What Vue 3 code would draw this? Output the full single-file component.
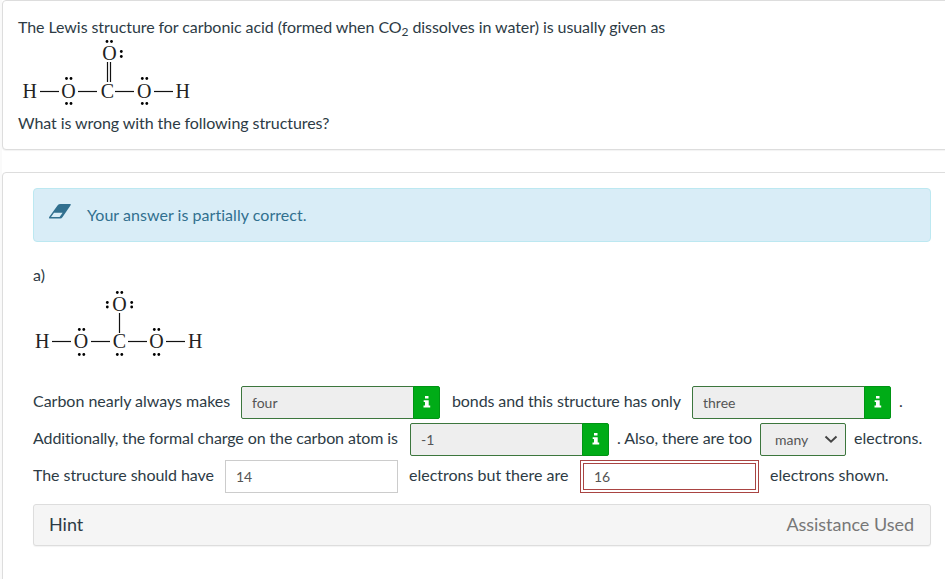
<script setup>
import { ref } from 'vue'

const bonds = ref('four')
const drawn = ref('three')
const charge = ref('-1')
const amount = ref('many')
const expected = ref('14')
const shown = ref('16')

// Atoms, bonds and lone pairs, in each drawing's own coordinates
const carbonic = {
  atoms: [
    ['H', 11.8, 58], ['O', 50.5, 58], ['C', 89.3, 58], ['O', 126.2, 58], ['H', 164.7, 58], ['O', 91.5, 20]
  ],
  lines: [
    [22, 51.5, 41, 51.5], [60, 51.5, 79, 51.5], [97, 51.5, 116, 51.5], [136, 51.5, 155, 51.5],
    [89.5, 22, 89.5, 42], [92.5, 22, 92.5, 42]
  ],
  dots: [
    [89, 1.5], [93.5, 1.5], [103.3, 11.5], [103.3, 16.5],
    [48.5, 38.5], [53, 38.5], [48.5, 63.5], [53, 63.5],
    [124.3, 38.5], [128.8, 38.5], [124.3, 63.5], [128.8, 63.5]
  ]
}
const variant = {
  atoms: [
    ['H', 9.3, 58], ['O', 48, 58], ['C', 86.3, 58], ['O', 123.5, 58], ['H', 162.3, 58], ['O', 86.5, 21]
  ],
  lines: [
    [19, 51.5, 38, 51.5], [58, 51.5, 77, 51.5], [95, 51.5, 114, 51.5], [133, 51.5, 152, 51.5],
    [86.5, 23, 86.5, 43]
  ],
  dots: [
    [84.3, 2.5], [88.8, 2.5], [74.3, 12.5], [74.3, 17], [98.7, 12.5], [98.7, 17],
    [46.3, 39.5], [50.8, 39.5], [46.3, 64.5], [50.8, 64.5],
    [84.3, 64.5], [88.8, 64.5],
    [121.3, 39.5], [125.8, 39.5], [121.3, 64.5], [125.8, 64.5]
  ]
}
</script>

<template>
  <main class="page">
    <section class="panel question">
      <p class="line">The Lewis structure for carbonic acid (formed when CO<sub>2</sub> dissolves in water) is usually given as</p>
      <svg class="molecule" width="180" height="70" viewBox="0 0 180 70">
        <line v-for="(l, i) in carbonic.lines" :key="'l' + i" :x1="l[0]" :y1="l[1]" :x2="l[2]" :y2="l[3]" />
        <text v-for="(a, i) in carbonic.atoms" :key="'a' + i" :x="a[1]" :y="a[2]">{{ a[0] }}</text>
        <circle v-for="(d, i) in carbonic.dots" :key="'d' + i" :cx="d[0]" :cy="d[1]" r="1.4" />
      </svg>
      <p class="line second">What is wrong with the following structures?</p>
    </section>

    <section class="panel answer">
      <div class="alert">
        <svg class="eraser" width="24" height="18" viewBox="0 0 24 18">
          <path d="M12.6 1H22Q23.4 1 22.6 2.3L14.6 13.9Q13.6 15.4 12.2 15.4H2Q.2 15.4 1.2 13.9L9.5 2.4Q10.6 1 12.6 1ZM6 9.8L3 14H11.6L14.6 9.8Z" fill-rule="evenodd" />
        </svg>
        <span>Your answer is partially correct.</span>
      </div>
      <p class="part">a)</p>
      <svg class="molecule" width="180" height="70" viewBox="0 0 180 70">
        <line v-for="(l, i) in variant.lines" :key="'l' + i" :x1="l[0]" :y1="l[1]" :x2="l[2]" :y2="l[3]" />
        <text v-for="(a, i) in variant.atoms" :key="'a' + i" :x="a[1]" :y="a[2]">{{ a[0] }}</text>
        <circle v-for="(d, i) in variant.dots" :key="'d' + i" :cx="d[0]" :cy="d[1]" r="1.4" />
      </svg>

      <div class="rows">
        <div class="row">
          <span class="w1">Carbon nearly always makes</span>
          <div class="group">
            <input v-model="bonds" class="field" readonly />
            <button class="info"><svg width="8" height="12" viewBox="0 0 8 12"><path d="M2 0H5.5V2.6H2ZM.7 4.2H5.7V9.5H7.2V11.4H.5V9.5H2V6.1H.7Z" /></svg></button>
          </div>
          <span class="w2">bonds and this structure has only</span>
          <div class="group">
            <input v-model="drawn" class="field" readonly />
            <button class="info"><svg width="8" height="12" viewBox="0 0 8 12"><path d="M2 0H5.5V2.6H2ZM.7 4.2H5.7V9.5H7.2V11.4H.5V9.5H2V6.1H.7Z" /></svg></button>
          </div>
          <span class="near">.</span>
        </div>
        <div class="row">
          <span class="w3">Additionally, the formal charge on the carbon atom is</span>
          <div class="group">
            <input v-model="charge" class="field" readonly />
            <button class="info"><svg width="8" height="12" viewBox="0 0 8 12"><path d="M2 0H5.5V2.6H2ZM.7 4.2H5.7V9.5H7.2V11.4H.5V9.5H2V6.1H.7Z" /></svg></button>
          </div>
          <span class="w4">. Also, there are too</span>
          <div class="choice">
            <span>{{ amount }}</span>
            <svg width="14" height="9" viewBox="0 0 14 9"><path d="M1.5 1.5L7 6.7L12.5 1.5" /></svg>
          </div>
          <span class="near">electrons.</span>
        </div>
        <div class="row">
          <span class="w5">The structure should have</span>
          <input v-model="expected" class="field plain" />
          <span class="w6">electrons but there are</span>
          <div class="wrong"><input v-model="shown" class="field" /></div>
          <span class="after">electrons shown.</span>
        </div>
      </div>

      <div class="hint">
        <span>Hint</span>
        <span class="used">Assistance Used</span>
      </div>
    </section>
  </main>
</template>

<style>
body {
  margin: 0;
  background: #fff;
  overflow: hidden;
}
</style>

<style scoped>
.page {
  box-sizing: border-box;
  width: 945px;
  height: 579px;
  padding-left: 2px;
  overflow: hidden;
  background: linear-gradient(to right, #fafafa 2px, #fff 2px);
  color: #2d3b45;
  font: 16px/24px Lato, "Liberation Sans", sans-serif;
}
.panel {
  box-sizing: border-box;
  width: 960px;
  border: 1px solid #ddd;
  border-radius: 4px;
  background: #fff;
  box-shadow: 0 1px 1px rgba(0, 0, 0, 0.05);
}
.question {
  height: 150px;
  padding: 14px 15px 0;
}
.line {
  height: 25px;
  margin: 0;
  white-space: nowrap;
  letter-spacing: -0.07px;
}
.line sub {
  font-size: 12px;
  line-height: 0;
  position: relative;
  vertical-align: baseline;
  bottom: -3px;
}
.second {
  margin-top: 1px;
}
.molecule {
  display: block;
  overflow: visible;
}
.molecule text {
  font: 20px "Liberation Serif", serif;
  text-anchor: middle;
  fill: #222;
}
.molecule line {
  stroke: #111;
  stroke-width: 1.2;
}
.molecule circle {
  fill: #000;
}
.answer {
  height: 430px;
  margin-top: 22px;
  padding: 15px 30px 0;
}
.alert {
  box-sizing: border-box;
  display: flex;
  width: 898px;
  height: 54px;
  padding: 14px;
  border: 1px solid #bce8f1;
  border-radius: 4px;
  background: #d9edf7;
  color: #31708f;
  letter-spacing: 0.04px;
}
.eraser {
  width: 24px;
  margin-right: 15px;
  fill: #31708f;
}
.part {
  margin: 21px 0 3px;
}
.rows {
  display: grid;
  gap: 4px;
  margin-top: 26px;
}
.row {
  display: flex;
  height: 33px;
  white-space: nowrap;
}
.row > span {
  box-sizing: border-box;
  line-height: 29px;
  flex: none;
}
.w1 { width: 208px; letter-spacing: -0.02px; }
.w2 { width: 252px; padding-left: 12px; letter-spacing: -0.1px; }
.w3 { width: 377px; letter-spacing: -0.11px; }
.w4 { width: 151px; padding-left: 8px; letter-spacing: -0.08px; }
.w5 { width: 192px; letter-spacing: -0.06px; }
.w6 { width: 182px; padding-left: 11px; }
.near { padding-left: 8px; }
.after { padding-left: 11px; }
.group {
  display: flex;
  flex: none;
  width: 199px;
}
.field {
  box-sizing: border-box;
  width: 173px;
  height: 33px;
  margin: 0;
  padding: 0 10px;
  border: 1px solid #3c763d;
  border-radius: 2px 0 0 2px;
  outline: none;
  background: #eee;
  color: #555;
  font: 14px Lato, sans-serif;
}
.info {
  box-sizing: border-box;
  display: flex;
  align-items: center;
  justify-content: center;
  width: 27px;
  height: 33px;
  margin-left: -1px;
  padding: 0 0 2px;
  border: 1px solid #009414;
  border-radius: 0 2px 2px 0;
  background: #00ac17;
}
.info svg {
  fill: #fff;
}
.choice {
  box-sizing: border-box;
  display: flex;
  align-items: center;
  justify-content: space-between;
  width: 86px;
  padding: 0 7px 0 14px;
  border: 1px solid #3c763d;
  border-radius: 2px;
  background: #eee;
  color: #555;
  font-size: 14px;
}
.choice svg {
  fill: none;
  stroke: #444;
  stroke-width: 2;
}
.plain {
  border-color: #ccc;
  border-radius: 0;
  background: #fff;
}
.wrong {
  box-sizing: border-box;
  width: 179px;
  height: 33px;
  padding: 2px;
  border: 1px solid #a94442;
}
.wrong .field {
  display: block;
  height: 27px;
  border-color: #a94442;
  border-radius: 0;
  background: #fff;
}
.hint {
  box-sizing: border-box;
  display: flex;
  justify-content: space-between;
  width: 898px;
  height: 42px;
  margin-top: 11px;
  padding: 0 16px 0 15px;
  border: 1px solid #ddd;
  border-radius: 3px;
  background: #f5f5f5;
  box-shadow: 0 1px 1px rgba(0, 0, 0, 0.05);
  font-size: 18px;
  line-height: 38px;
}
.used {
  color: #777;
  letter-spacing: -0.03px;
}
</style>
